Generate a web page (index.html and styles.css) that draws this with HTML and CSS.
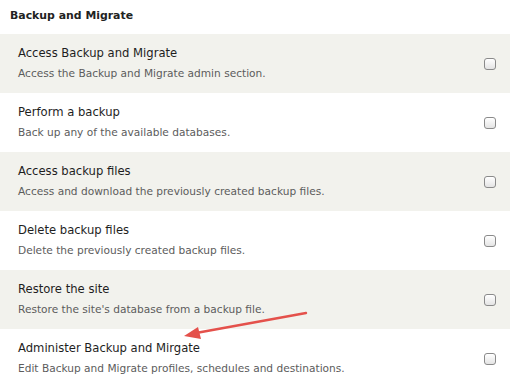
FILE: index.html
```html
<!DOCTYPE html>
<html>
<head>
<meta charset="utf-8">
<link rel="stylesheet" href="styles.css">
</head>
<body>
<div class="page">
  <h2 class="module">Backup and Migrate</h2>
  <ul class="perms">
    <li class="perm odd">
      <div class="info"><div class="title">Access Backup and Migrate</div><div class="desc">Access the Backup and Migrate admin section.</div></div>
      <input type="checkbox" class="cb">
    </li>
    <li class="perm">
      <div class="info"><div class="title">Perform a backup</div><div class="desc">Back up any of the available databases.</div></div>
      <input type="checkbox" class="cb">
    </li>
    <li class="perm odd">
      <div class="info"><div class="title">Access backup files</div><div class="desc">Access and download the previously created backup files.</div></div>
      <input type="checkbox" class="cb">
    </li>
    <li class="perm">
      <div class="info"><div class="title">Delete backup files</div><div class="desc">Delete the previously created backup files.</div></div>
      <input type="checkbox" class="cb">
    </li>
    <li class="perm odd">
      <div class="info"><div class="title">Restore the site</div><div class="desc">Restore the site's database from a backup file.</div></div>
      <input type="checkbox" class="cb">
    </li>
    <li class="perm">
      <div class="info"><div class="title">Administer Backup and Mirgate</div><div class="desc">Edit Backup and Migrate profiles, schedules and destinations.</div></div>
      <input type="checkbox" class="cb">
    </li>
  </ul>
  <svg class="arrow" width="510" height="385" viewBox="0 0 510 385">
    <line x1="306" y1="313" x2="196" y2="333" stroke="#e4514b" stroke-width="2.4" stroke-linecap="round"/>
    <polygon points="184,336 198,327 201,339" fill="#e4514b"/>
  </svg>
</div>
</body>
</html>
```
FILE: styles.css
```css
html, body {
  margin: 0;
  padding: 0;
  background: #fff;
}
.page {
  position: relative;
  width: 510px;
  height: 385px;
  overflow: hidden;
  font-family: "DejaVu Sans", "Noto Sans", sans-serif;
}
.module {
  margin: 0;
  height: 34px;
  box-sizing: border-box;
  padding: 8px 0 0 10px;
  font-size: 10.9px;
  font-weight: bold;
  line-height: 16px;
  color: #222;
}
.perms {
  list-style: none;
  margin: 0;
  padding: 0;
}
.perm {
  height: 59px;
  box-sizing: border-box;
  display: flex;
  align-items: center;
  justify-content: space-between;
  padding: 0 14px 0 18px;
  background: #fff;
}
.perm.odd {
  background: #f2f2ed;
}
.info {
  display: flex;
  flex-direction: column;
  gap: 5px;
  margin-top: -3px;
}
.title {
  font-size: 11.6px;
  line-height: 16px;
  color: #1e1e1e;
}
.desc {
  font-size: 10.6px;
  line-height: 14px;
  color: #5c5c5c;
}
.cb {
  -webkit-appearance: none;
  appearance: none;
  margin: 1px 0 0 0;
  width: 12px;
  height: 12px;
  box-sizing: border-box;
  border: 1px solid #8a8a8a;
  border-radius: 3px;
  background: linear-gradient(#ffffff, #e4e4e4);
  box-shadow: inset 0 1px 0 #fff;
}
.arrow {
  position: absolute;
  left: 0;
  top: 0;
  pointer-events: none;
}
```
